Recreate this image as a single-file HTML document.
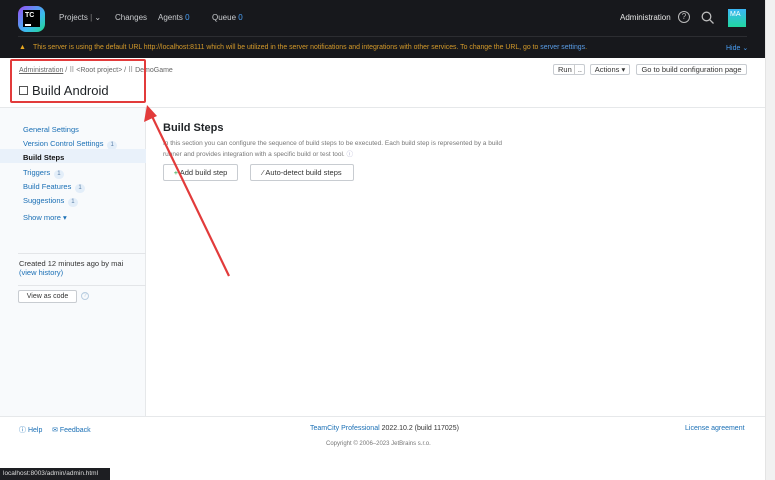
<!DOCTYPE html>
<html><head><meta charset="utf-8"><style>
*{box-sizing:border-box;margin:0;padding:0}
body{width:775px;height:480px;overflow:hidden;font-family:"Liberation Sans",sans-serif;background:#fff;position:relative;color:#1f2326}
.a{position:absolute;white-space:nowrap}
#hdr{position:absolute;left:0;top:0;width:765px;height:58px;background:#17181c}
#sb{position:absolute;right:0;top:0;width:10px;height:480px;background:#f1f1f1;border-left:1px solid #e4e4e4}
.nav{color:#c9cbce;font-size:8px}
.blue{color:#4a9ff5}
.btn{position:absolute;border:1px solid #c8ccd1;border-radius:2px;background:#fff;font-size:7.5px;color:#333;text-align:center}
.side{font-size:7.5px;color:#1a6fb5}
.badge{display:inline-block;background:#e3eef9;color:#5a7fa8;border-radius:5px;font-size:6px;padding:0 3px;margin-left:4px;line-height:9px}
</style></head><body>
<div id="hdr">
 <div class="a" style="left:18px;top:6px;width:27px;height:26px;border-radius:8px;background:linear-gradient(135deg,#9b4cf5,#3cb9f0 60%,#21d789)"></div>
 <div class="a" style="left:23px;top:10px;width:17px;height:17px;background:#000;color:#fff;font-size:7px;font-weight:bold;padding:2px 0 0 2px">TC<div style="width:6px;height:1.5px;background:#fff;margin-top:5px"></div></div>
 <div class="a nav" style="left:59px;top:13px">Projects <span style="color:#888">|</span> ⌄</div>
 <div class="a nav" style="left:115px;top:13px">Changes</div>
 <div class="a nav" style="left:158px;top:13px">Agents <span class="blue">0</span></div>
 <div class="a nav" style="left:212px;top:13px">Queue <span class="blue">0</span></div>
 <div class="a nav" style="left:620px;top:13px;color:#e6e6e6">Administration</div>
 <div class="a" style="left:678px;top:11px;width:12px;height:12px;border:1.3px solid #bbb;border-radius:50%;color:#bbb;font-size:8px;text-align:center;line-height:10px">?</div>
 <svg class="a" style="left:701px;top:11px" width="13" height="13"><circle cx="5.5" cy="5.5" r="4.3" fill="none" stroke="#bbb" stroke-width="1.3"/><path d="M8.7 8.7L12.5 12.5" stroke="#bbb" stroke-width="1.3"/></svg>
 <div class="a" style="left:728px;top:9px;width:18px;height:18px;background:linear-gradient(180deg,#3bb6f5,#21d7a0);color:#fff;font-size:7px;padding:2px 0 0 2px">MA</div>
 <div class="a" style="left:18px;top:36px;width:729px;height:1px;background:#2c2d31"></div>
 <div class="a" style="left:19px;top:44px;font-size:7px;color:#e8a820">▲</div>
 <div class="a" style="left:33px;top:44px;font-size:6.9px;color:#d49a2a">This server is using the default URL http://localhost:8111 which will be utilized in the server notifications and integrations with other services. To change the URL, go to <span style="color:#5a9ee8">server settings</span>.</div>
 <div class="a" style="left:726px;top:44px;font-size:7px;color:#4a9ff5">Hide ⌄</div>
</div>
<div id="sb"></div>
<div class="a" style="left:19px;top:66px;font-size:7px;color:#666"><span style="text-decoration:underline">Administration</span> / ⠿ &lt;Root project&gt; / ⠿ DemoGame</div>
<div class="a" style="left:19px;top:83px;font-size:13px;color:#1f2326"><span style="display:inline-block;width:9px;height:9px;border:1px solid #555;margin-right:4px"></span>Build Android</div>
<div class="a" style="left:10px;top:59px;width:136px;height:44px;border:2px solid #e23b3b;border-radius:2px"></div>
<div class="btn" style="left:553px;top:64px;width:32px;height:11px;line-height:9px;text-align:left;padding-left:4px">Run <span style="border-left:1px solid #ccc;padding-left:3px">..</span></div>
<div class="btn" style="left:590px;top:64px;width:40px;height:11px;line-height:9px">Actions ▾</div>
<div class="btn" style="left:636px;top:64px;width:111px;height:11px;line-height:9px">Go to build configuration page</div>
<div class="a" style="left:0;top:107px;width:765px;height:1px;background:#e6e8ea"></div>
<div class="a" style="left:0;top:108px;width:146px;height:308px;background:#f8fafc;border-right:1px solid #e6e8ea"></div>
<div class="a side" style="left:23px;top:125px">General Settings</div>
<div class="a side" style="left:23px;top:139px">Version Control Settings<span class="badge">1</span></div>
<div class="a" style="left:0;top:149px;width:146px;height:14px;background:#e9f1fa"></div>
<div class="a" style="left:23px;top:153px;font-size:7.5px;font-weight:bold;color:#111">Build Steps</div>
<div class="a side" style="left:23px;top:168px">Triggers<span class="badge">1</span></div>
<div class="a side" style="left:23px;top:182px">Build Features<span class="badge">1</span></div>
<div class="a side" style="left:23px;top:196px">Suggestions<span class="badge">1</span></div>
<div class="a side" style="left:23px;top:213px">Show more ▾</div>
<div class="a" style="left:18px;top:253px;width:128px;height:1px;background:#e3e5e8"></div>
<div class="a" style="left:19px;top:259px;font-size:7.5px;color:#333;line-height:9px">Created 12 minutes ago by mai<br><span class="side">(view history)</span></div>
<div class="a" style="left:18px;top:285px;width:128px;height:1px;background:#e3e5e8"></div>
<div class="btn" style="left:18px;top:290px;width:59px;height:13px;line-height:11px;font-size:7px">View as code</div>
<div class="a" style="left:81px;top:292px;width:8px;height:8px;border:1px solid #b8cde0;border-radius:50%;font-size:6px;color:#b8cde0;text-align:center;line-height:6px">?</div>
<div class="a" style="left:163px;top:122px;font-size:11px;font-weight:bold">Build Steps</div>
<div class="a" style="left:163px;top:138px;font-size:6.5px;color:#777;line-height:11px">In this section you can configure the sequence of build steps to be executed. Each build step is represented by a build<br>runner and provides integration with a specific build or test tool. <span style="color:#aac">ⓘ</span></div>
<div class="btn" style="left:163px;top:164px;width:75px;height:17px;line-height:15px"><span style="color:#2aa84a">+</span> Add build step</div>
<div class="btn" style="left:250px;top:164px;width:104px;height:17px;line-height:15px">⁄ Auto-detect build steps</div>
<svg class="a" style="left:140px;top:100px" width="100" height="180"><path d="M89 176L9 10" stroke="#e23b3b" stroke-width="2.2"/><path d="M7 5L4 22L17 16Z" fill="#e23b3b"/></svg>
<div class="a" style="left:0;top:416px;width:765px;height:1px;background:#e6e8ea"></div>
<div class="a side" style="left:19px;top:425px;font-size:7px">ⓘ Help &nbsp; &nbsp; ✉ Feedback</div>
<div class="a side" style="left:310px;top:425px;font-size:7px">TeamCity Professional <span style="color:#333">2022.10.2 (build 117025)</span></div>
<div class="a" style="left:326px;top:441px;font-size:6px;color:#777">Copyright © 2006–2023 JetBrains s.r.o.</div>
<div class="a side" style="left:685px;top:425px;font-size:7px">License agreement</div>
<div class="a" style="left:0;top:468px;width:110px;height:12px;background:#1d1e22;color:#ddd;font-size:6.5px;padding:2px 0 0 3px">localhost:8003/admin/admin.html</div>
</body></html>
